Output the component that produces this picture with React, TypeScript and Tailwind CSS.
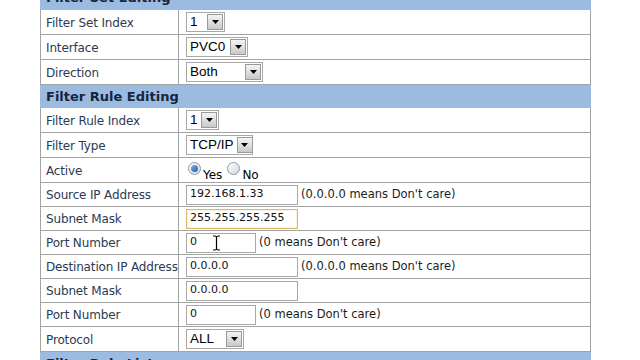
import React from 'react';

const labelFont = { fontFamily: '"DejaVu Sans", Verdana, sans-serif' };

function DropButton() {
  return (
    <span className="flex h-[16px] w-[16px] shrink-0 items-center justify-center border border-[#9a9a9a] bg-gradient-to-b from-[#f4f4f4] to-[#c9c9c9]">
      <svg width="7" height="4" viewBox="0 0 7 4">
        <path d="M0 0h7L3.5 4z" fill="#000" />
      </svg>
    </span>
  );
}

function Select({ value, width }: { value: string; width: string }) {
  return (
    <div
      className={`flex h-[20px] items-center justify-between gap-[3px] border border-[#a8a8a8] bg-white pl-[3px] pr-[1px] ${width}`}
    >
      <span className="text-[13.5px] leading-none text-black" style={{ fontFamily: '"Liberation Sans", Arial, sans-serif' }}>
        {value}
      </span>
      <DropButton />
    </div>
  );
}

function Field({ value, width, focused }: { value: string; width: string; focused?: boolean }) {
  return (
    <div
      className={`flex h-[20px] items-center border bg-white pl-[3px] text-[11px] text-[#111] ${width} ${
        focused ? 'border-[#d9b86c] shadow-[inset_0_0_0_1px_#fbf3dc]' : 'border-[#a8a8a8]'
      }`}
      style={labelFont}
    >
      {value}
    </div>
  );
}

function Radio({ checked }: { checked?: boolean }) {
  return (
    <span className="flex h-[13px] w-[13px] items-center justify-center rounded-full border border-[#8a99ab] bg-gradient-to-br from-[#ffffff] to-[#d3d8de]">
      {checked && <span className="h-[7px] w-[7px] rounded-full bg-gradient-to-br from-[#7fb3e6] to-[#1f5d9a]" />}
    </span>
  );
}

function Header({ title, h }: { title: string; h: string }) {
  return (
    <div
      className={`flex items-center whitespace-nowrap bg-[#9bbbe0] pl-[6px] text-[13px] font-bold text-[#16243d] ${h}`}
      style={labelFont}
    >
      {title}
    </div>
  );
}

function Row({ label, h, children }: { label: string; h: string; children: React.ReactNode }) {
  return (
    <div className={`flex border-x border-b border-[#a3a3a3] ${h}`}>
      <div
        className="flex w-[138px] shrink-0 items-center whitespace-nowrap border-r border-[#a3a3a3] pl-[5px] pt-[1px] text-[12px] tracking-[-0.15px] text-[#2c3b52]"
        style={labelFont}
      >
        {label}
      </div>
      <div className="flex flex-1 items-center gap-[3px] pl-[7px]">{children}</div>
    </div>
  );
}

function Note({ text }: { text: string }) {
  return (
    <span className="whitespace-nowrap pt-[1px] text-[11.5px] text-[#1c1c1c]" style={labelFont}>
      {text}
    </span>
  );
}

export default function App() {
  return (
    <div className="relative h-[360px] w-[640px] overflow-hidden bg-white">
      <div className="-mt-[14px] ml-[40px] w-[551px]">
        <Header title="Filter Set Editing" h="h-[24px]" />
        <Row label="Filter Set Index" h="h-[25px]">
          <Select value="1" width="w-[39px]" />
        </Row>
        <Row label="Interface" h="h-[25px]">
          <Select value="PVC0" width="w-[62px]" />
        </Row>
        <Row label="Direction" h="h-[25px]">
          <Select value="Both" width="w-[77px]" />
        </Row>
        <Header title="Filter Rule Editing" h="h-[23px]" />
        <Row label="Filter Rule Index" h="h-[25px]">
          <Select value="1" width="w-[33px]" />
        </Row>
        <Row label="Filter Type" h="h-[25px]">
          <Select value="TCP/IP" width="w-[67px]" />
        </Row>
        <Row label="Active" h="h-[25px]">
          <div className="flex items-center pl-[2px] pt-[3px] text-[12px] text-black" style={labelFont}>
            <span className="-mt-[6px]">
              <Radio checked />
            </span>
            <span className="ml-[2px] mt-[6px]">Yes</span>
            <span className="-mt-[6px] ml-[5px]">
              <Radio />
            </span>
            <span className="ml-[2px] mt-[6px]">No</span>
          </div>
        </Row>
        <Row label="Source IP Address" h="h-[24px]">
          <Field value="192.168.1.33" width="w-[112px]" />
          <Note text="(0.0.0.0 means Don't care)" />
        </Row>
        <Row label="Subnet Mask" h="h-[24px]">
          <Field value="255.255.255.255" width="w-[112px]" focused />
        </Row>
        <Row label="Port Number" h="h-[24px]">
          <Field value="0" width="w-[70px]" />
          <Note text="(0 means Don't care)" />
        </Row>
        <Row label="Destination IP Address" h="h-[24px]">
          <Field value="0.0.0.0" width="w-[112px]" />
          <Note text="(0.0.0.0 means Don't care)" />
        </Row>
        <Row label="Subnet Mask" h="h-[24px]">
          <Field value="0.0.0.0" width="w-[112px]" />
        </Row>
        <Row label="Port Number" h="h-[24px]">
          <Field value="0" width="w-[70px]" />
          <Note text="(0 means Don't care)" />
        </Row>
        <Row label="Protocol" h="h-[25px]">
          <Select value="ALL" width="w-[58px]" />
        </Row>
        <Header title="Filter Rule List" h="h-[24px]" />
      </div>

      {/* mouse text cursor */}
      <svg className="absolute left-[212px] top-[235px]" width="9" height="16" viewBox="0 0 9 16">
        <path d="M1 1h2.5M5.5 1H8M4.5 1.5v13M1 15h2.5M5.5 15H8M3.5 1.5h2M3.5 14.5h2" stroke="#000" strokeWidth="1.2" fill="none" />
      </svg>
    </div>
  );
}
